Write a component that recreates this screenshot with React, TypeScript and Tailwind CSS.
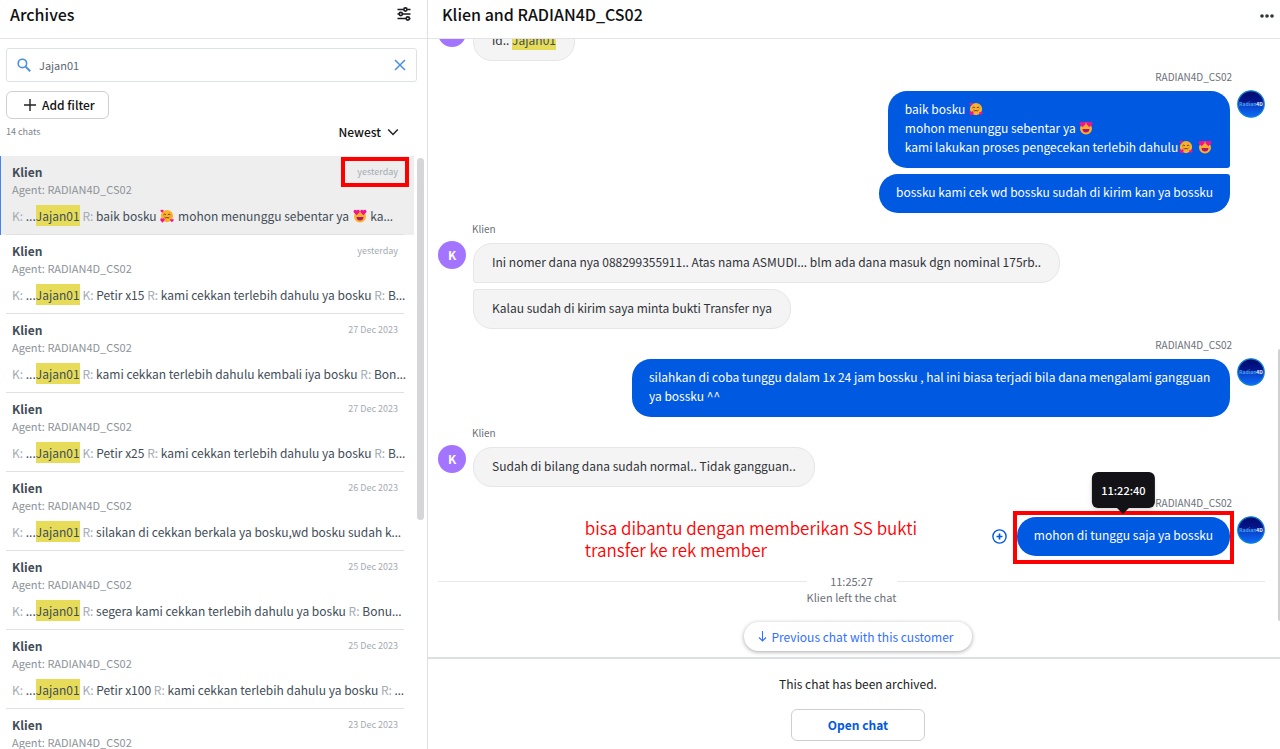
import type { ReactNode } from "react";

type Part = { who?: string; text: ReactNode };

function LoveFace() {
  return (
    <svg viewBox="0 0 16 16" role="img" aria-label="🥰" className="mx-px inline-block size-[14px] align-[-2px]">
      <circle cx="8" cy="8" r="7" fill="#fbb02d" />
      <path d="M4.2 6.4q1.2-1.6 2.4 0M9.2 6.4q1.2-1.6 2.4 0M5.4 9.6q1.3 1.6 2.6 0q1.3 1.6 2.6 0" fill="none" stroke="#5a3315" strokeWidth="1" strokeLinecap="round" />
      <path d="M2.4 4.4.7 2.6C0 1.4 1.5.1 2.4 1.4 3.3.1 4.8 1.4 4.1 2.6Z" fill="#f5128f" />
      <path d="M2.8 15.6.6 13C-.4 11.2 1.8 9.8 2.8 11.4 3.8 9.8 6 11.2 5 13Z" fill="#f5128f" />
      <path d="M13.6 15.2 11.8 13.2C11 11.8 12.7 10.6 13.6 12 14.5 10.6 16.2 11.8 15.4 13.2Z" fill="#f5128f" />
    </svg>
  );
}

function HeartEyes() {
  return (
    <svg viewBox="0 0 16 16" role="img" aria-label="😍" className="mx-px inline-block size-[14px] align-[-2px]">
      <circle cx="8" cy="8.6" r="6.8" fill="#fbb02d" />
      <path d="M4.2 7.2 1 4C-.4 1.6 2.6-.4 4.2 1.8 5.8-.4 8.6 1.6 7.2 4Z" fill="#f5128f" />
      <path d="M11.8 7.2 8.8 4C7.4 1.6 10.2-.4 11.8 1.8 13.4-.4 16.4 1.6 15 4Z" fill="#f5128f" />
      <path d="M4 9h8q-.4 4-4 4T4 9Z" fill="#b3156a" />
    </svg>
  );
}

const hit = <mark className="bg-[#e6dc5a] py-[2px] text-[#424d57]">Jajan01</mark>;
const more = <span className="font-['Noto_Sans',sans-serif]">…</span>;

const chats: { date: string; active?: boolean; parts: Part[] }[] = [
  {
    date: "yesterday",
    active: true,
    parts: [{ who: "R", text: <>baik bosku <LoveFace /> mohon menunggu sebentar ya <HeartEyes /> ka</> }],
  },
  {
    date: "yesterday",
    parts: [{ who: "K", text: "Petir x15" }, { who: "R", text: "kami cekkan terlebih dahulu ya bosku" }, { who: "R", text: "B" }],
  },
  {
    date: "27 Dec 2023",
    parts: [{ who: "R", text: "kami cekkan terlebih dahulu kembali iya bosku" }, { who: "R", text: "Bon" }],
  },
  {
    date: "27 Dec 2023",
    parts: [{ who: "K", text: "Petir x25" }, { who: "R", text: "kami cekkan terlebih dahulu ya bosku" }, { who: "R", text: "B" }],
  },
  {
    date: "26 Dec 2023",
    parts: [{ who: "R", text: "silakan di cekkan berkala ya bosku,wd bosku sudah k" }],
  },
  {
    date: "25 Dec 2023",
    parts: [{ who: "R", text: "segera kami cekkan terlebih dahulu ya bosku" }, { who: "R", text: "Bonu" }],
  },
  {
    date: "25 Dec 2023",
    parts: [{ who: "K", text: "Petir x100" }, { who: "R", text: "kami cekkan terlebih dahulu ya bosku" }, { who: "R", text: "" }],
  },
  {
    date: "23 Dec 2023",
    parts: [],
  },
];

function ChatItem({ date, active, parts }: { date: string; active?: boolean; parts: Part[] }) {
  return (
    <li className={active ? "h-[79px] shrink-0 border-l border-[#4384f5] bg-[#eeeeee] pr-[10px] pl-[5px]" : "h-[79px] shrink-0 pr-[10px] pl-[6px]"}>
      <a href="#chat" className="block h-full border-b border-[#dfe1e4] pt-[7px] pr-[6px] pl-[6px]">
        <div className="flex items-center justify-between leading-[18px]">
          <span className="text-[12px] font-bold text-[#424d57]">Klien</span>
          <time className="relative text-[9px] text-[#a5abb2]">
            {date}
            {active && <span className="absolute -inset-x-[11px] -inset-y-[6px] left-[-16px] border-4 border-[#ff0000]" />}
          </time>
        </div>
        <div className="text-[11px] leading-[16px] text-[#8d9399]">Agent: RADIAN4D_CS02</div>
        {parts.length > 0 && (
          <p className="mt-[9px] text-[12px] leading-[20px] whitespace-nowrap text-[#424d57]">
            <span className="text-[#a5abb2]">K: </span>...{hit}
            {parts.map((p, i) => (
              <span key={i}>
                <span className="text-[#a5abb2]"> {p.who}: </span>
                {p.text}
              </span>
            ))}
            {more}
          </p>
        )}
      </a>
    </li>
  );
}

function Sidebar() {
  return (
    <aside className="flex w-[428px] shrink-0 flex-col border-r border-[#dddfe2]">
      <header className="flex h-[39px] shrink-0 items-center justify-between border-b border-[#e4e4e5] pr-[16px] pb-[10px] pl-[10px]">
        <h1 className="text-[16px] leading-[20px] font-medium">Archives</h1>
        <button type="button" aria-label="Filters">
          <svg viewBox="0 0 14 14" className="size-[14px]" fill="none" stroke="#1b1b20" strokeWidth="1.6">
            <path d="M.5 2.5h6M10.2 2.5h3.3M.5 7h1.5M5.6 7h7.9M.5 11.5h8.5M12.5 11.5h1" />
            <circle cx="8.4" cy="2.5" r="1.6" />
            <circle cx="3.8" cy="7" r="1.6" />
            <circle cx="10.8" cy="11.5" r="1.6" />
          </svg>
        </button>
      </header>
      <div className="flex shrink-0 flex-col items-start pt-[9px] pr-[10px] pl-[6px]">
        <div className="flex h-[34px] w-full items-center gap-[8px] rounded-[3px] border border-[#dde2e6] pr-[10px] pl-[10px]">
          <svg viewBox="0 0 14 14" className="size-[14px]" fill="none" stroke="#4a8fe2" strokeWidth="1.6">
            <circle cx="5.4" cy="5.4" r="4.2" />
            <path d="m8.6 8.6 4.6 4.6" strokeWidth="2" />
          </svg>
          <input aria-label="Search" defaultValue="Jajan01" className="min-w-0 flex-1 text-[11px] text-[#5c6670] outline-none" />
          <button type="button" aria-label="Clear search">
            <svg viewBox="0 0 12 12" className="size-[12px]" fill="none" stroke="#4a8fe2" strokeWidth="1.5">
              <path d="m1 1 10 10M11 1 1 11" />
            </svg>
          </button>
        </div>
        <button type="button" className="mt-[9px] flex h-[28px] items-center gap-[6px] rounded-[6px] border border-[#cfcfd1] pr-[13px] pl-[17px] text-[12px] leading-[18px] font-medium text-[#111]">
          <svg viewBox="0 0 12 12" className="size-[12px]" fill="none" stroke="#222" strokeWidth="1.4">
            <path d="M6 0v12M0 6h12" />
          </svg>
          Add filter
        </button>
        <div className="mt-[3px] flex h-[20px] w-full items-center justify-between pr-[18px]">
          <span className="text-[9px] text-[#7d848c]">14 chats</span>
          <button type="button" className="flex items-center gap-[6px] text-[12px] font-medium text-[#111]">
            Newest
            <svg viewBox="0 0 12 12" className="size-[12px]" fill="none" stroke="#222" strokeWidth="1.5">
              <path d="m1.2 3.4 4.8 5 4.8-5" />
            </svg>
          </button>
        </div>
      </div>
      <div className="relative mt-[14px] min-h-0 flex-1 overflow-hidden pr-[13px]">
        <ul className="flex flex-col">
          {chats.map((c, i) => (
            <ChatItem key={i} {...c} />
          ))}
        </ul>
        <div className="absolute top-[2px] right-[3px] h-[61%] w-[7px] rounded-full bg-[#d6d6d8]" />
      </div>
    </aside>
  );
}

function ClientAvatar() {
  return <div className="flex size-[28px] items-center justify-center rounded-full bg-[#a374ff] text-[12px] font-bold text-white">K</div>;
}

function AgentAvatar() {
  return (
    <svg viewBox="0 0 28 28" role="img" aria-label="Radian4D" className="size-[28px]">
      <defs>
        <linearGradient id="badge" x1="0" y1="0" x2="0" y2="1">
          <stop offset="0" stopColor="#020a6b" />
          <stop offset="0.4" stopColor="#05168a" />
          <stop offset="0.6" stopColor="#0a48d0" />
          <stop offset="1" stopColor="#0b6cfa" />
        </linearGradient>
      </defs>
      <circle cx="14" cy="14" r="13.2" fill="url(#badge)" stroke="#0c7fd6" strokeWidth="1.3" />
      <text x="14" y="15.9" textAnchor="middle" fontSize="5" fontWeight="bold" fill="#4da3ee">
        Radian<tspan fill="#e4efff">4D</tspan>
      </text>
    </svg>
  );
}

function ClientBubble({ shape, children }: { shape: string; children: ReactNode }) {
  return <p className={`${shape} max-w-[75%] border border-[#e6e6e7] bg-[#f4f4f4] px-[18px] pt-[8px] pb-[11px] text-[12px] leading-[19px] text-[#303338]`}>{children}</p>;
}

function AgentBubble({ shape, children }: { shape: string; children: ReactNode }) {
  return <p className={`${shape} bg-[#0059e1] px-[17px] pt-[8px] pb-[12px] text-[12px] leading-[19px] text-white`}>{children}</p>;
}

function ClientGroup({ label = true, children }: { label?: boolean; children: ReactNode }) {
  return (
    <section className="flex shrink-0 gap-[7px] pl-[10px]">
      <div className={label ? "pt-[20px]" : "-mt-[2px]"}>
        <ClientAvatar />
      </div>
      <div className="flex min-w-0 flex-1 flex-col items-start gap-[6px]">
        {label && <span className="-ml-px text-[10px] leading-[16px] text-[#6b7078]">Klien</span>}
        {children}
      </div>
    </section>
  );
}

function AgentGroup({ children }: { children: ReactNode }) {
  return (
    <section className="flex shrink-0 justify-end gap-[7px] pr-[15px]">
      <div className="flex max-w-[598px] flex-col items-end gap-[6px]">
        <span className="-mr-[2px] text-[10px] leading-[16px] text-[#6b7078]">RADIAN4D_CS02</span>
        {children}
      </div>
      <div className="pt-[21px]">
        <AgentAvatar />
      </div>
    </section>
  );
}

function Conversation() {
  return (
    <div className="relative flex min-h-0 flex-1 flex-col justify-end gap-[8px] overflow-hidden">
      <ClientGroup label={false}>
        <ClientBubble shape="rounded-[19px]">
          id.. {hit}
        </ClientBubble>
      </ClientGroup>
      <AgentGroup>
        <AgentBubble shape="rounded-[19px] rounded-br-[3px]">
          baik bosku <LoveFace />
          <br />
          mohon menunggu sebentar ya <HeartEyes />
          <br />
          kami lakukan proses pengecekan terlebih dahulu
          <LoveFace /> <HeartEyes />
        </AgentBubble>
        <AgentBubble shape="rounded-[19px] rounded-tr-[3px]">bossku kami cek wd bossku sudah di kirim kan ya bossku</AgentBubble>
      </AgentGroup>
      <ClientGroup>
        <ClientBubble shape="rounded-[19px] rounded-bl-[3px]">
          Ini nomer dana nya 088299355911.. Atas nama ASMUDI... blm ada dana masuk dgn nominal 175rb..
        </ClientBubble>
        <ClientBubble shape="rounded-[19px] rounded-tl-[3px]">Kalau sudah di kirim saya minta bukti Transfer nya</ClientBubble>
      </ClientGroup>
      <AgentGroup>
        <AgentBubble shape="rounded-[19px]">
          silahkan di coba tunggu dalam 1x 24 jam bossku , hal ini biasa terjadi bila dana mengalami gangguan ya bossku ^^
        </AgentBubble>
      </AgentGroup>
      <ClientGroup>
        <ClientBubble shape="rounded-[19px]">Sudah di bilang dana sudah normal.. Tidak gangguan..</ClientBubble>
      </ClientGroup>
      <AgentGroup>
        <div className="relative flex items-center gap-[10px]">
          <button type="button" aria-label="Add" className="text-[#0059e1]">
            <svg viewBox="0 0 15 15" className="size-[15px]" fill="none" stroke="currentColor" strokeWidth="1.4">
              <circle cx="7.5" cy="7.5" r="6.6" />
              <path d="M7.5 4.5v6M4.5 7.5h6" strokeWidth="1.7" />
            </svg>
          </button>
          <div className="relative">
            <AgentBubble shape="rounded-[19px]">mohon di tunggu saja ya bossku</AgentBubble>
            <div className="absolute -inset-x-[4px] -top-[6px] -bottom-[8px] border-4 border-[#ff0000]" />
            <div role="tooltip" className="absolute bottom-full left-1/2 mb-[9px] -translate-x-1/2 rounded-[6px] bg-[#131317] px-[9px] py-[9px] text-[11px] leading-[18px] font-medium text-white shadow-md">
              11:22:40
              <svg viewBox="0 0 12 6" className="absolute top-full left-1/2 h-[6px] w-[12px] -translate-x-1/2">
                <path d="M0 0h12L7 5q-1 1-2 0Z" fill="#131317" />
              </svg>
            </div>
          </div>
          <p className="absolute top-0 right-full mr-[72px] w-[335px] text-[17px] leading-[22px] font-[350] text-[#ff0000]">
            bisa dibantu dengan memberikan SS bukti transfer ke rek member
          </p>
        </div>
      </AgentGroup>
      <div className="mt-[9px] shrink-0 px-[10px] text-center text-[11px] leading-[16px] text-[#6b7078]">
        <div className="flex items-center pr-[5px]">
          <span className="h-px flex-1 bg-[#e8e9ea]" />
          <time className="w-[90px]">11:25:27</time>
          <span className="h-px flex-1 bg-[#e8e9ea]" />
        </div>
        <div className="pr-[5px]">Klien left the chat</div>
      </div>
      <button type="button" className="mt-[9px] mb-[6px] ml-[8px] flex h-[29px] shrink-0 items-center gap-[4px] self-center rounded-full bg-white pr-[18px] pl-[14px] text-[12px] text-[#3370ff] shadow-[0_1px_4px_rgba(0,0,0,0.35)]">
        <svg viewBox="0 0 9 11" className="h-[11px] w-[9px]" fill="none" stroke="currentColor" strokeWidth="1.1">
          <path d="M4.5 0v10M1 6.5l3.5 3.5L8 6.5" />
        </svg>
        Previous chat with this customer
      </button>
      <div className="absolute right-0 bottom-[36px] h-[44%] w-[2px] rounded-l-full bg-[#d0d0d2]" />
    </div>
  );
}

export default function App() {
  return (
    <div className="flex h-screen overflow-hidden bg-white font-['Noto_Sans_CJK_SC',sans-serif] text-[#111]">
      <Sidebar />
      <main className="flex min-w-0 flex-1 flex-col">
        <header className="flex h-[39px] shrink-0 items-center justify-between border-b border-[#e4e4e5] pr-[6px] pb-[10px] pl-[14px]">
          <h2 className="text-[16px] leading-[20px] font-medium">Klien and RADIAN4D_CS02</h2>
          <button type="button" aria-label="More options" className="pt-[3px]">
            <svg viewBox="0 0 14 4" className="h-[4px] w-[14px]" fill="#2b333b">
              <circle cx="2" cy="2" r="1.8" />
              <circle cx="7" cy="2" r="1.8" />
              <circle cx="12" cy="2" r="1.8" />
            </svg>
          </button>
        </header>
        <Conversation />
        <footer className="flex shrink-0 flex-col items-center gap-[15px] border-t-2 border-[#dcdee0] pt-[15px] pb-[8px] pl-[8px]">
          <p className="text-[12px] leading-[20px] text-[#222]">This chat has been archived.</p>
          <button type="button" className="h-[32px] rounded-[6px] border border-[#cfcfd1] px-[36px] text-[12px] font-bold text-[#0059e1]">
            Open chat
          </button>
        </footer>
      </main>
    </div>
  );
}
